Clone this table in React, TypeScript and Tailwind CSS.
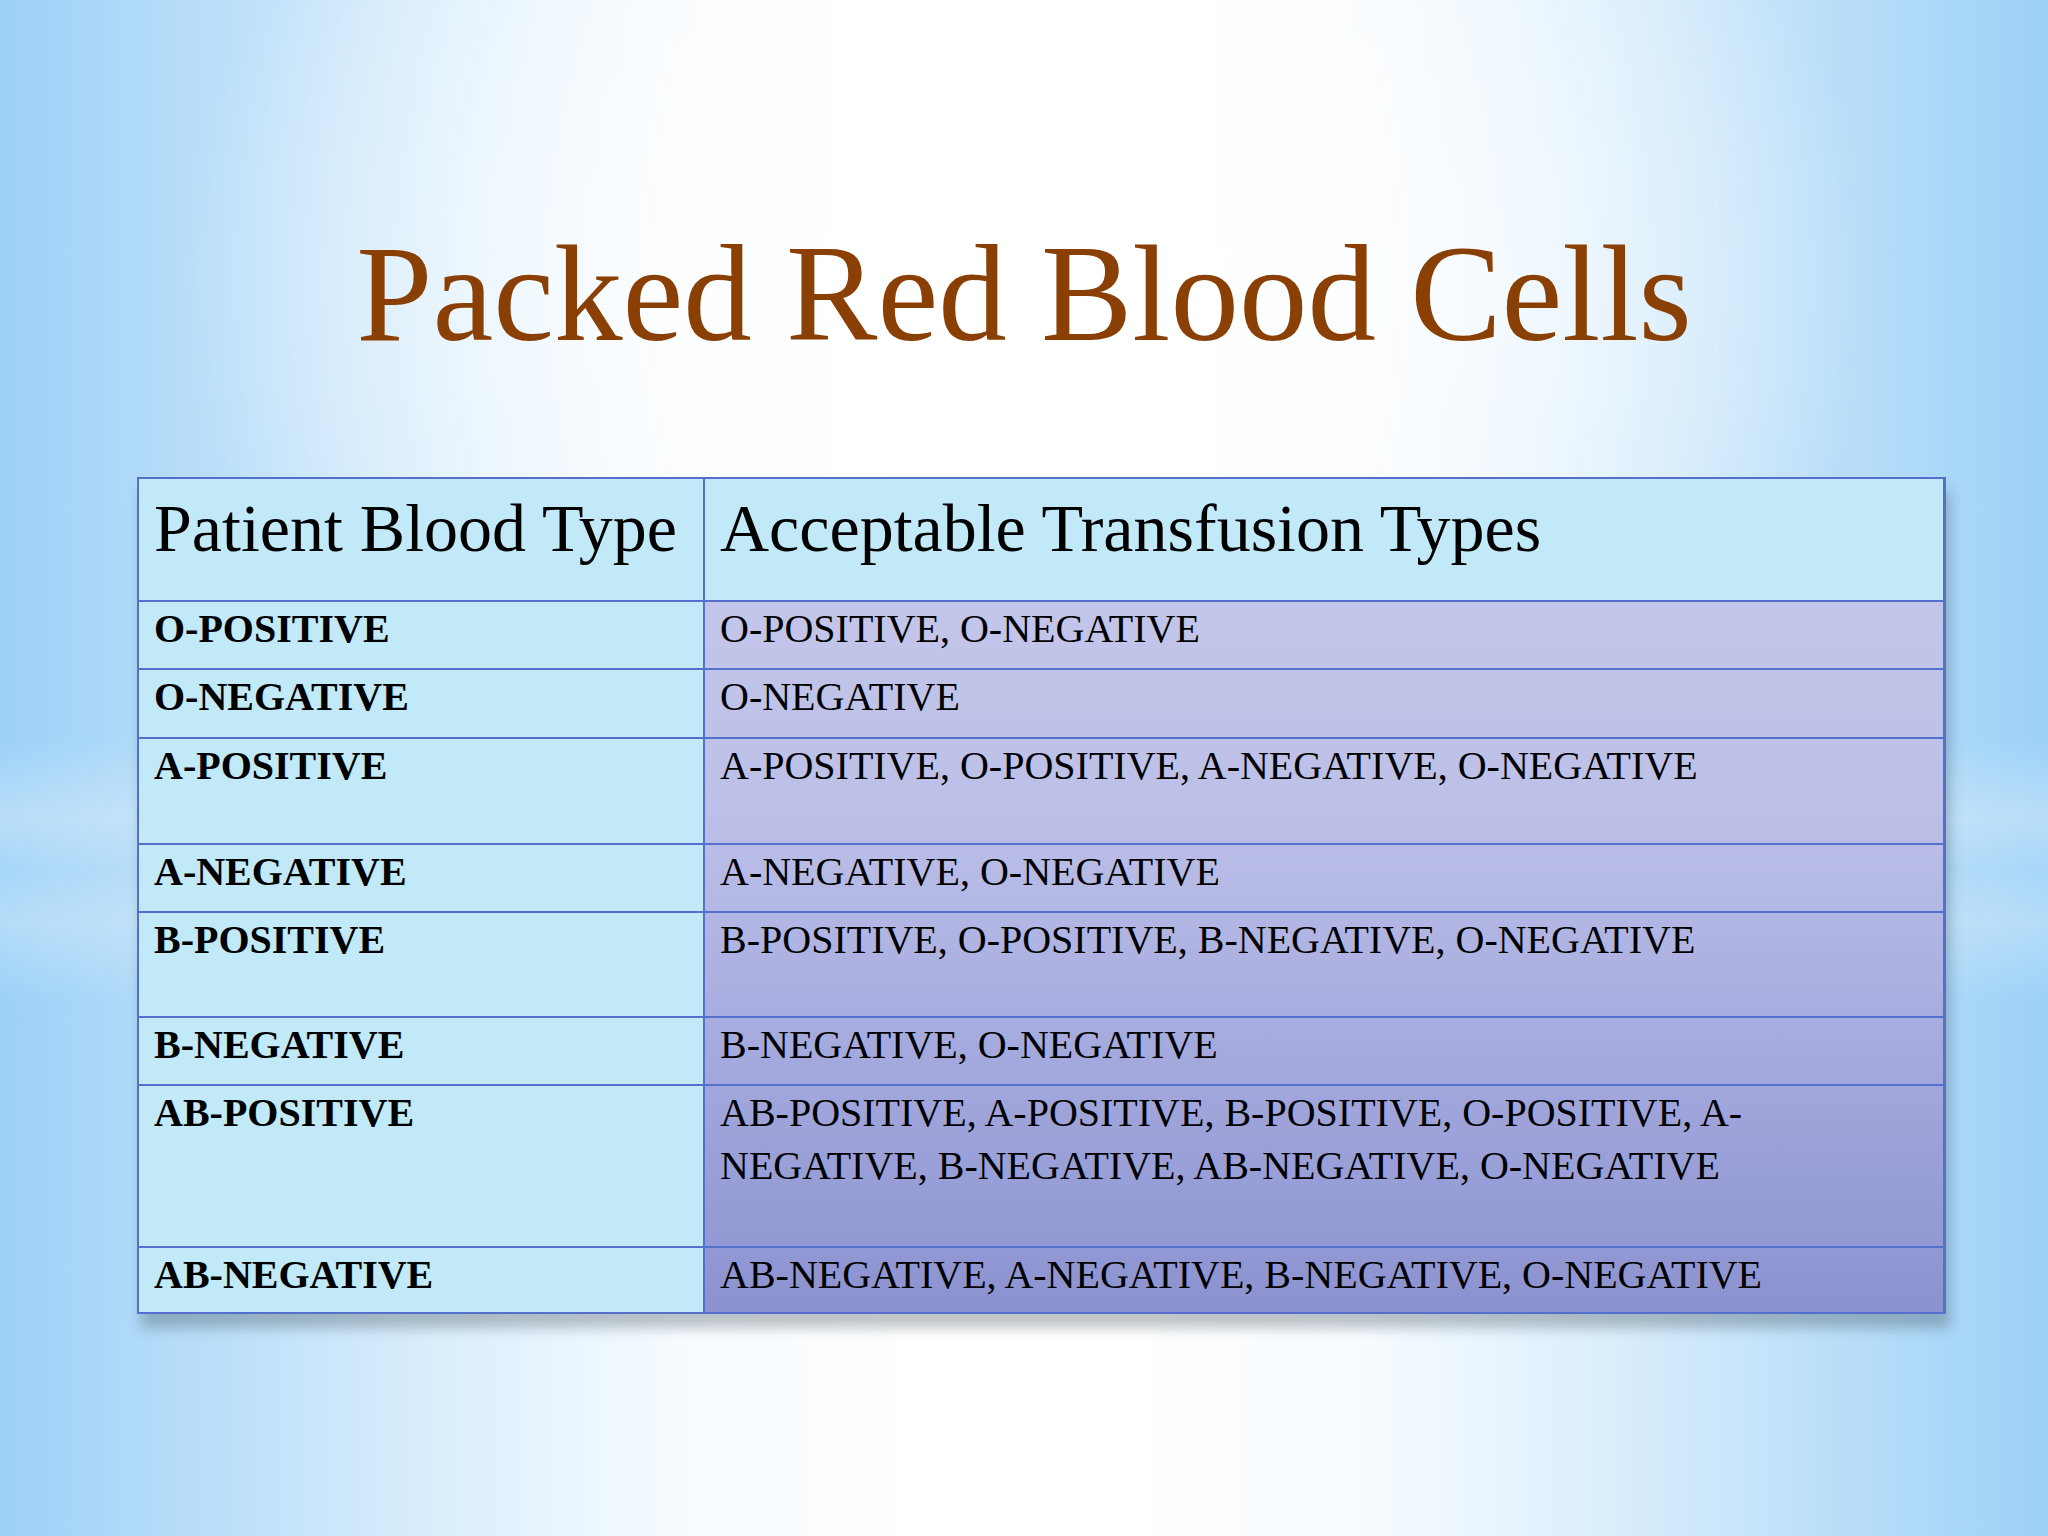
const rows = [
  { type: 'O-POSITIVE', ok: ['O-POSITIVE, O-NEGATIVE'], h: 'h-[68px]' },
  { type: 'O-NEGATIVE', ok: ['O-NEGATIVE'], h: 'h-[69px]' },
  { type: 'A-POSITIVE', ok: ['A-POSITIVE, O-POSITIVE, A-NEGATIVE, O-NEGATIVE'], h: 'h-[106px]' },
  { type: 'A-NEGATIVE', ok: ['A-NEGATIVE, O-NEGATIVE'], h: 'h-[68px]' },
  { type: 'B-POSITIVE', ok: ['B-POSITIVE, O-POSITIVE, B-NEGATIVE, O-NEGATIVE'], h: 'h-[105px]' },
  { type: 'B-NEGATIVE', ok: ['B-NEGATIVE, O-NEGATIVE'], h: 'h-[68px]' },
  {
    type: 'AB-POSITIVE',
    ok: ['AB-POSITIVE, A-POSITIVE, B-POSITIVE, O-POSITIVE, A-', 'NEGATIVE, B-NEGATIVE, AB-NEGATIVE, O-NEGATIVE'],
    h: 'h-[162px]',
  },
  { type: 'AB-NEGATIVE', ok: ['AB-NEGATIVE, A-NEGATIVE, B-NEGATIVE, O-NEGATIVE'], h: 'h-[66px]' },
]

export default function App() {
  return (
    <div className="relative h-[1536px] w-[2048px] overflow-hidden bg-[linear-gradient(90deg,#9dd1f7_0%,#b9def9_10%,#dcefFc_22%,#f6fbff_33%,#ffffff_45%,#ffffff_55%,#f6fbff_67%,#dcefFc_78%,#b9def9_90%,#9dd1f7_100%)] font-['Liberation_Serif','Times_New_Roman',serif] text-black">
      {/* soft glow behind the title */}
      <div className="pointer-events-none absolute inset-0 bg-[radial-gradient(ellipse_42%_38%_at_50%_18%,rgba(255,255,255,0.95)_0%,rgba(255,255,255,0.6)_50%,rgba(255,255,255,0)_100%)]" />
      {/* horizontal light streaks at mid height */}
      <div className="pointer-events-none absolute inset-x-0 top-[740px] h-[260px] bg-[linear-gradient(180deg,rgba(225,241,253,0)_0%,rgba(225,241,253,0.4)_30%,rgba(225,241,253,0.15)_50%,rgba(225,241,253,0.35)_70%,rgba(225,241,253,0)_100%)]" />

      <div className="relative flex flex-col">
        <h1 className="pt-[226px] text-center text-[137px] leading-none font-normal text-[#8a3f05]">
          Packed Red Blood Cells
        </h1>

        <div className="ml-[137px] mt-[114px] w-[1809px] shadow-[4px_14px_12px_rgba(60,70,80,0.32)]">
          <div className="border-2 border-[#5570cc] border-r-[3px]">
            <div className="flex h-[121px] bg-[#c1e9f8] text-[68px] leading-[1.15]">
              <div className="w-[566px] border-r-2 border-[#5570cc] pl-[15px] pt-[10px]">Patient Blood Type</div>
              <div className="flex-1 pl-[15px] pt-[10px]">Acceptable Transfusion Types</div>
            </div>
            <div className="bg-[linear-gradient(180deg,#c3c6e9_0%,#bcc0e8_30%,#a7acdf_60%,#8b92cf_100%)] text-[40px] leading-[53px]">
              {rows.map((r) => (
                <div key={r.type} className={`flex border-t-2 border-[#5570cc] ${r.h}`}>
                  <div className="w-[566px] border-r-2 border-[#5570cc] bg-[#c1e9f8] pl-[15px] font-bold">
                    {r.type}
                  </div>
                  <div className="flex-1 pl-[15px]">
                    {r.ok.map((line) => (
                      <div key={line}>{line}</div>
                    ))}
                  </div>
                </div>
              ))}
            </div>
          </div>
        </div>
      </div>
    </div>
  )
}
